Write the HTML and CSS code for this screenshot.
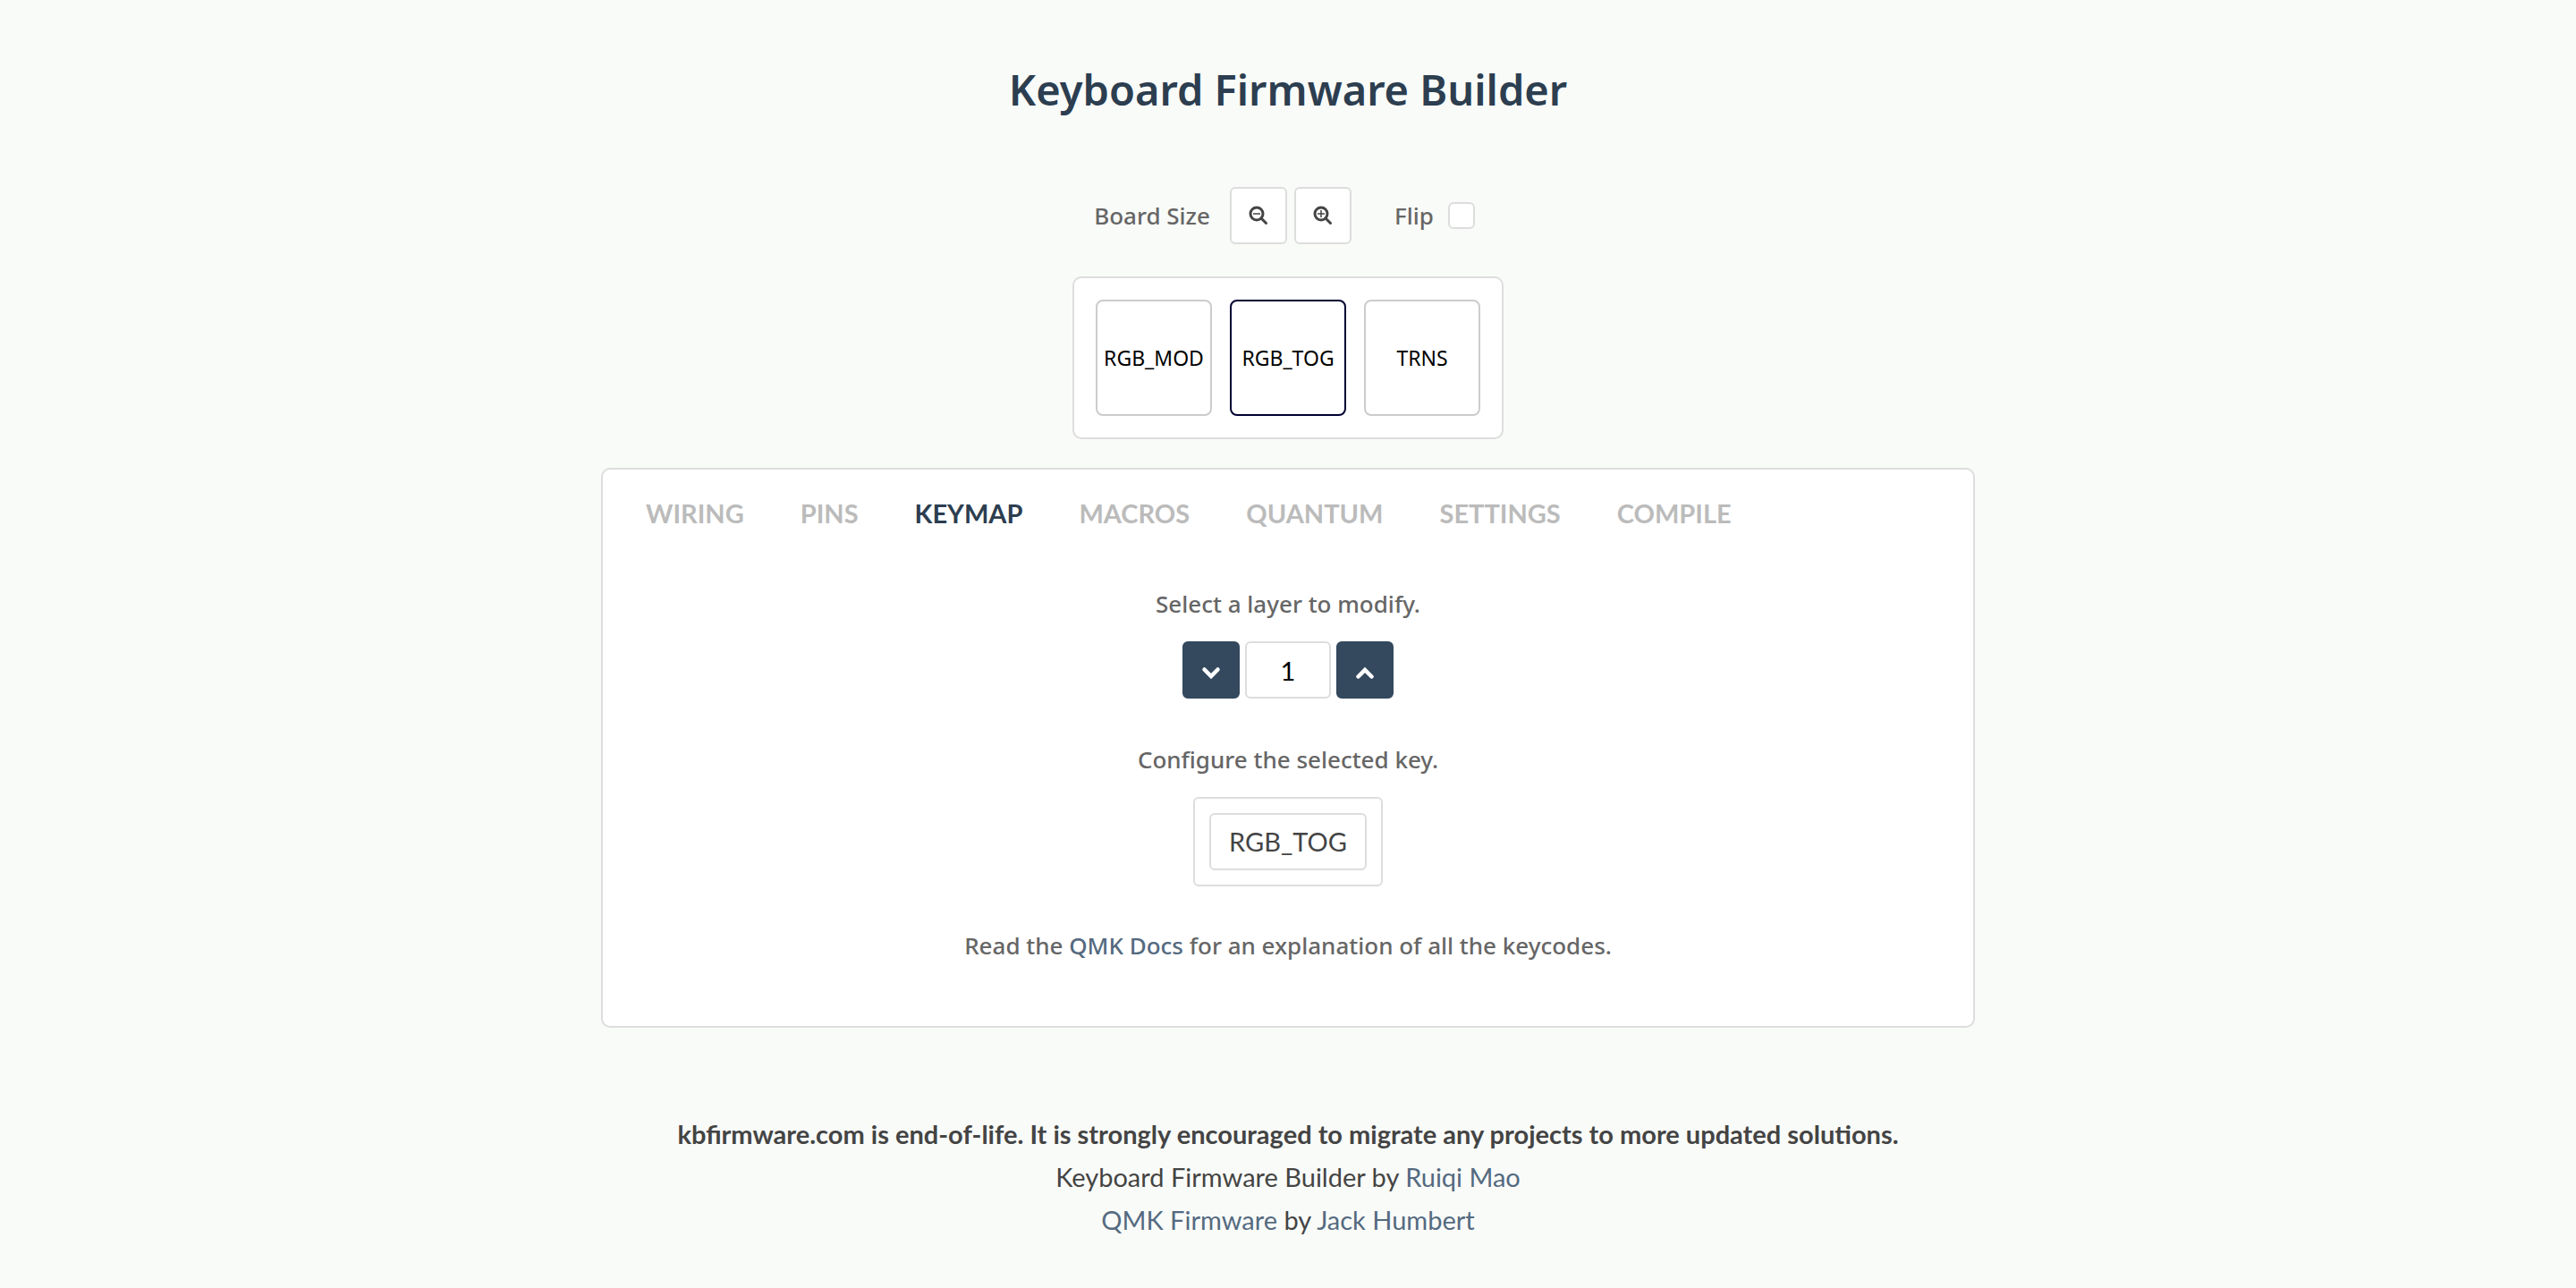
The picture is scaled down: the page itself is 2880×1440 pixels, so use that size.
FILE: index.html
```html
<!DOCTYPE html>
<html lang="en">
<head>
  <meta charset="UTF-8">
  <meta name="viewport" content="width=device-width, initial-scale=1.0">
  <title>Keyboard Firmware Builder</title>
  <link rel="stylesheet" href="styles.css">
</head>
<body>

  <h1>Keyboard Firmware Builder</h1>

  <div class="controls">
    <span class="controls-label">Board Size</span>
    <button type="button" class="btn btn-light" aria-label="Zoom out">
      <svg class="icon" viewBox="0 0 22 22">
        <circle cx="9" cy="9" r="7" />
        <path d="M14 14l5.5 5.5" />
        <path class="thin" d="M5 9h8" />
      </svg>
    </button>
    <button type="button" class="btn btn-light" aria-label="Zoom in">
      <svg class="icon" viewBox="0 0 22 22">
        <circle cx="9" cy="9" r="7" />
        <path d="M14 14l5.5 5.5" />
        <path class="thin" d="M5 9h8M9 5v8" />
      </svg>
    </button>
    <label for="flip" class="flip-label">Flip</label>
    <input type="checkbox" id="flip" class="flip">
  </div>

  <!-- Keyboard -->
  <div class="keyboard">
    <button type="button" class="key">RGB_MOD</button>
    <button type="button" class="key selected">RGB_TOG</button>
    <button type="button" class="key">TRNS</button>
  </div>

  <main class="panel">
    <nav class="tabs">
      <a href="#wiring">WIRING</a>
      <a href="#pins">PINS</a>
      <a href="#keymap" class="active">KEYMAP</a>
      <a href="#macros">MACROS</a>
      <a href="#quantum">QUANTUM</a>
      <a href="#settings">SETTINGS</a>
      <a href="#compile">COMPILE</a>
    </nav>

    <label for="layer" class="text">Select a layer to modify.</label>
    <div class="layer">
      <button type="button" class="btn btn-dark" aria-label="Previous layer">
        <svg class="icon" viewBox="0 0 22 22"><path class="thick" d="M3.5 10.5l7.5 7.5 7.5-7.5" /></svg>
      </button>
      <input type="text" id="layer" value="1">
      <button type="button" class="btn btn-dark" aria-label="Next layer">
        <svg class="icon" viewBox="0 0 22 22"><path class="thick" d="M3.5 18.5l7.5-7.5 7.5 7.5" /></svg>
      </button>
    </div>

    <p class="text">Configure the selected key.</p>
    <div class="keycode">
      <button type="button" class="btn btn-light btn-wide">RGB_TOG</button>
    </div>

    <p class="text">Read the <a href="#docs">QMK Docs</a> for an explanation of all the keycodes.</p>
  </main>

  <footer>
    <strong>kbfirmware.com is end-of-life. It is strongly encouraged to migrate any projects to more updated solutions.</strong>
    <p>Keyboard Firmware Builder by <a href="#ruiqi">Ruiqi Mao</a></p>
    <p><a href="#qmk">QMK Firmware</a> by <a href="#jack">Jack Humbert</a></p>
  </footer>

</body>
</html>
```
FILE: styles.css
```css
* {
  box-sizing: border-box;
}

body {
  margin: 0;
  padding: 64px 32px;
  background-color: #F9FBF8;
  font-family: Lato, sans-serif;
  font-size: 29px;
  line-height: 48px;
  color: #444;
  display: flex;
  flex-direction: column;
  align-items: center;
}

h1 {
  margin: 0 0 73px;
  font-family: "Noto Sans", sans-serif;
  font-size: 47px;
  font-weight: 600;
  line-height: 72px;
  color: #2C3E50;
}

p {
  margin: 0;
}

a {
  color: #546A80;
  text-decoration: none;
}

button,
input {
  margin: 0;
  padding: 0;
  font: inherit;
}

button {
  cursor: pointer;
}

.controls {
  display: flex;
  align-items: center;
  gap: 8px;
  margin-bottom: 36px;
}

.controls-label,
.flip-label,
.text {
  font-family: "Noto Sans", sans-serif;
  font-size: 26px;
  font-weight: 500;
  color: #666;
}

.controls-label {
  margin-right: 14px;
}

.flip-label {
  margin-left: 40px;
}

.flip {
  appearance: none;
  width: 30px;
  height: 30px;
  margin: 0 8px;
  background-color: #FFF;
  border: 2px solid #DDD;
  border-radius: 6px;
}

.btn {
  display: flex;
  justify-content: center;
  align-items: center;
  width: 64px;
  height: 64px;
  border: 2px solid #DDD;
  border-radius: 6px;
}

.btn-light {
  background-color: #FFF;
  color: #444;
}

.btn-dark {
  background-color: #34495E;
  border-color: #34495E;
  color: #FFF;
}

.btn-wide {
  width: auto;
  padding: 0 20px;
}

.icon {
  width: 22px;
  height: 22px;
  fill: none;
  stroke: currentColor;
  stroke-width: 3;
  stroke-linecap: round;
}

.icon .thin {
  stroke-width: 1.5;
  stroke-linecap: butt;
}

.icon .thick {
  stroke-width: 4.5;
}

.keyboard {
  display: flex;
  gap: 20px;
  margin-bottom: 32px;
  padding: 24px;
  background-color: #FFF;
  border: 2px solid #DDD;
  border-radius: 10px;
}

.key {
  width: 130px;
  height: 130px;
  background-color: #FFF;
  border: 2px solid #CCC;
  border-radius: 8px;
  font-family: "Noto Sans", sans-serif;
  font-size: 23px;
  color: #000;
}

.key.selected {
  border-color: #003;
}

.panel {
  display: flex;
  flex-direction: column;
  align-items: center;
  width: 100%;
  max-width: 1536px;
  padding: 25px 48px 66px;
  background-color: #FFF;
  border: 2px solid #DDD;
  border-radius: 10px;
}

.tabs {
  display: flex;
  align-self: stretch;
  gap: 63px;
  margin-bottom: 53px;
}

.tabs a {
  font-weight: bold;
  color: #BBB;
}

.tabs a.active {
  color: #2C3E50;
}

.layer {
  display: flex;
  gap: 6px;
  margin: 18px 0 44px;
}

.layer input {
  width: 96px;
  height: 64px;
  border: 2px solid #DDD;
  border-radius: 6px;
  text-align: center;
  color: #000;
}

.keycode {
  margin: 18px 0 42px;
  padding: 16px;
  border: 2px solid #DDD;
  border-radius: 6px;
}

footer {
  margin-top: 95px;
  text-align: center;
}
```
